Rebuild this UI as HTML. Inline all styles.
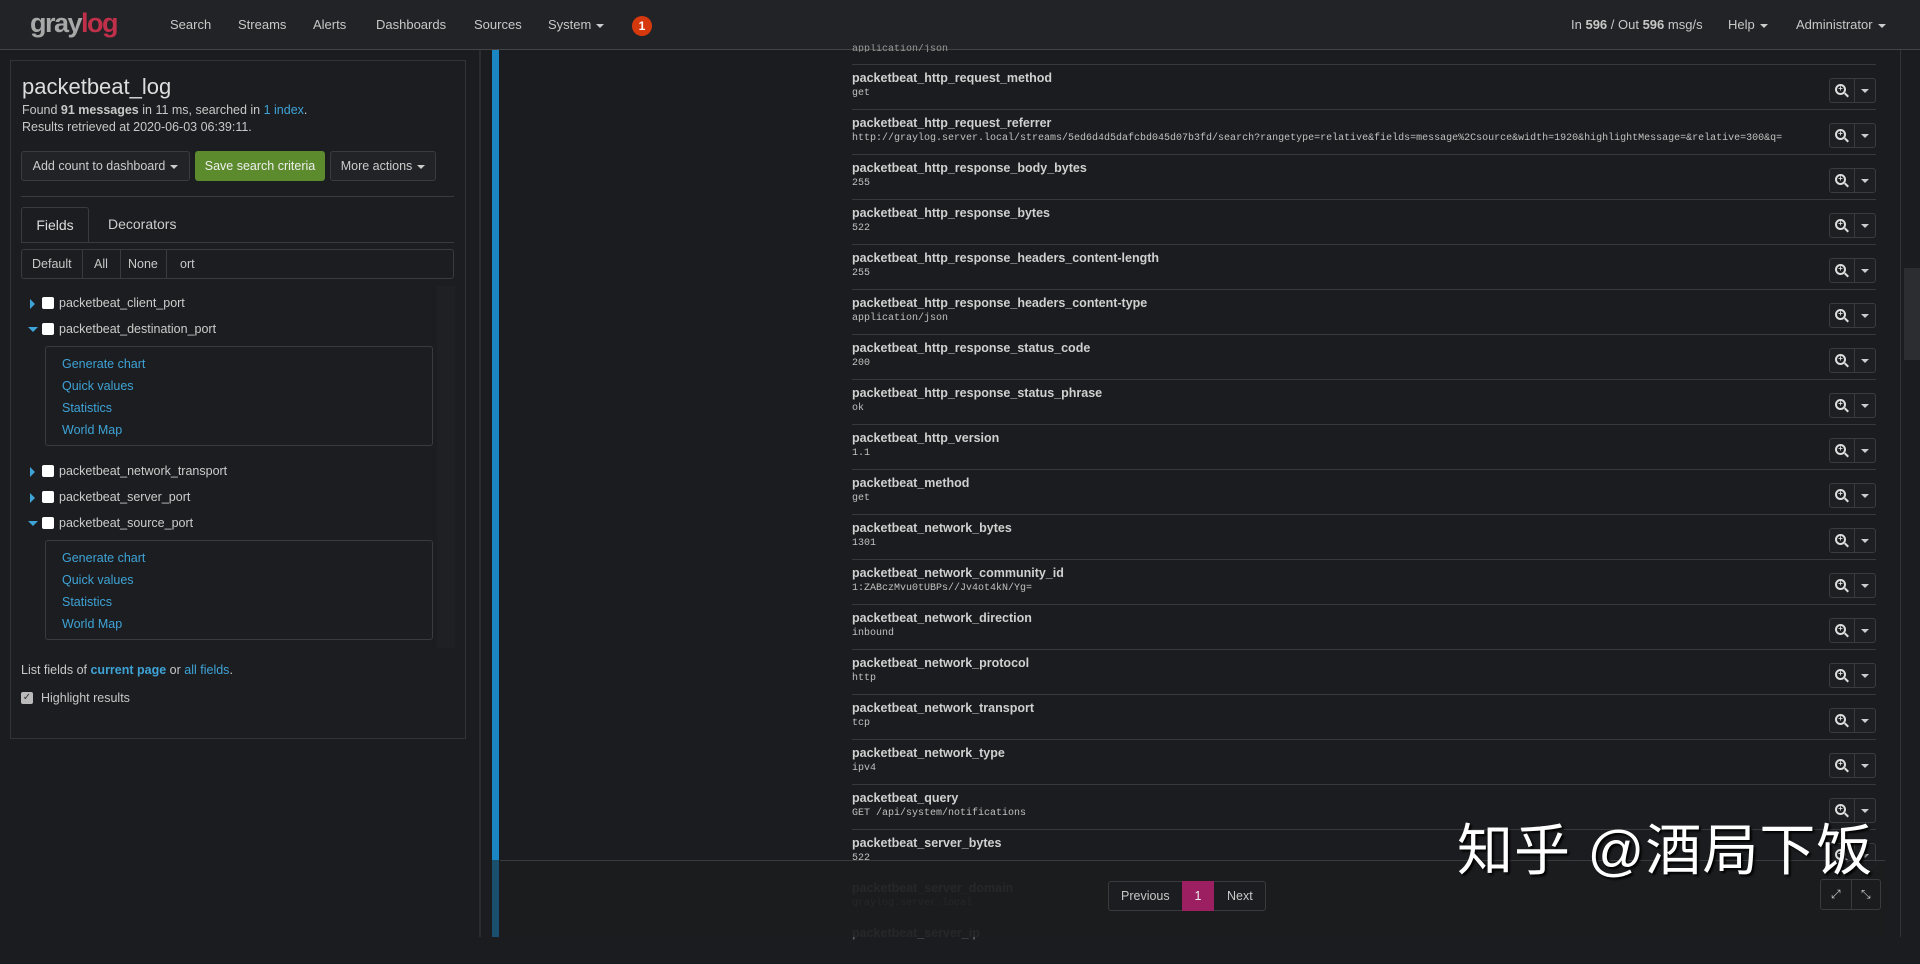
<!DOCTYPE html>
<html><head><meta charset="utf-8"><style>
*{box-sizing:border-box;margin:0;padding:0}
body{width:1920px;height:937px;overflow:hidden;background:#1b1c1f;font-family:"Liberation Sans",sans-serif;color:#c8c8c8;position:relative;font-size:13px}
.nav{position:absolute;left:0;top:0;width:1920px;height:50px;background:#222326;border-bottom:1px solid #444}
.nav span{position:absolute;top:17px;font-size:13px;color:#c8c8c8}
.caret{display:inline-block;width:0;height:0;border-left:4px solid transparent;border-right:4px solid transparent;border-top:4px solid #ccc;vertical-align:middle;margin-left:5px}
.badge{position:absolute;left:632px;top:16px;width:20px;height:20px;border-radius:10px;background:#d6390e;color:#fff;font-size:12px;text-align:center;line-height:20px;font-weight:bold}
.panel{position:absolute;left:10px;top:60px;width:456px;height:679px;background:#1c1d20;border:1px solid #333}
.a{color:#3ea3d6}
.btn{position:absolute;top:151px;height:30px;border:1px solid #3a3b3e;background:#222326;color:#ccc;font-size:12.5px;line-height:28px;text-align:center;border-radius:3px}
.fld{position:absolute;left:30px;font-size:12.5px;color:#ccc}
.tri{position:absolute;left:0;top:2px;width:0;height:0;border-top:5px solid transparent;border-bottom:5px solid transparent;border-left:5px solid #3ea3d6}
.trid{position:absolute;left:-2px;top:4px;width:0;height:0;border-left:5px solid transparent;border-right:5px solid transparent;border-top:5px solid #3ea3d6}
.cb{position:absolute;left:12px;top:0;width:12px;height:12px;background:#fff;border-radius:2px}
.fld .t{position:absolute;left:29px;top:-1px;white-space:nowrap}
.box{position:absolute;left:45px;width:388px;height:100px;border:1px solid #3a3b3e;border-radius:3px}
.box div{position:absolute;left:16px;font-size:12.5px;color:#3ea3d6}
.row{position:absolute;left:852px;width:1024px;height:45px;border-top:1px solid #38393c}
.row b{position:absolute;left:0;top:6px;font-size:12.5px;color:#d0d0d0}
.row i{position:absolute;left:0;top:23px;font-style:normal;font-family:"Liberation Mono",monospace;font-size:10px;color:#c0c0c0;white-space:nowrap}
.rb{position:absolute;right:0;top:13px;width:47px;height:25px;border:1px solid #3a3b3e;border-radius:3px;background:#1e1f22}
.rb:after{content:"";position:absolute;left:24px;top:0;bottom:0;border-left:1px solid #3a3b3e}
.rb .m{position:absolute;left:5px;top:5px;width:11px;height:11px;border:2px solid #ddd;border-radius:50%;font-style:normal;font-size:8px;line-height:7px;text-align:center;color:#ddd;font-weight:bold}
.rb .m:after{content:"";position:absolute;left:7px;top:8px;width:5px;height:2px;background:#ddd;transform:rotate(45deg)}
.rb .c{position:absolute;left:31px;top:10px;width:0;height:0;border-left:4px solid transparent;border-right:4px solid transparent;border-top:4px solid #ccc}
</style></head><body>
<div class="nav">
<div style="position:absolute;left:30px;top:8px;font-size:27px;letter-spacing:-1.5px;font-weight:bold"><span style="position:static;color:#a8a8a8;font-size:27px">gray</span><span style="position:static;color:#c0304a;font-size:27px">log</span></div>
<span style="left:170px">Search</span><span style="left:238px">Streams</span><span style="left:313px">Alerts</span><span style="left:376px">Dashboards</span><span style="left:474px">Sources</span><span style="left:548px">System<i class="caret"></i></span>
<div class="badge">1</div>
<span style="left:1571px">In <b>596</b> / Out <b>596</b> msg/s</span><span style="left:1728px">Help<i class="caret"></i></span><span style="left:1796px">Administrator<i class="caret"></i></span>
</div>
<div class="panel">
<div style="position:absolute;left:11px;top:13px;font-size:22px;color:#ddd">packetbeat_log</div>
<div style="position:absolute;left:11px;top:42px;font-size:12.5px">Found <b>91 messages</b> in 11 ms, searched in <span class="a">1 index</span>.</div>
<div style="position:absolute;left:11px;top:59px;font-size:12.5px">Results retrieved at 2020-06-03 06:39:11.</div>
</div>
<div class="btn" style="left:21px;width:169px">Add count to dashboard<i class="caret"></i></div>
<div class="btn" style="left:195px;width:130px;background:#5c8b2e;border-color:#5c8b2e;color:#eee">Save search criteria</div>
<div class="btn" style="left:330px;width:106px">More actions<i class="caret"></i></div>
<div style="position:absolute;left:21px;top:196px;width:433px;border-top:1px solid #3a3b3e"></div>
<div style="position:absolute;left:21px;top:207px;width:68px;height:36px;border:1px solid #3a3b3e;border-bottom:none;border-radius:3px 3px 0 0;background:#1c1d20;font-size:14px;text-align:center;line-height:34px;color:#ddd">Fields</div>
<div style="position:absolute;left:108px;top:216px;font-size:14px;color:#ccc">Decorators</div>
<div style="position:absolute;left:21px;top:242px;width:433px;border-top:1px solid #3a3b3e"></div>
<div style="position:absolute;left:21px;top:249px;width:433px;height:30px;border:1px solid #3a3b3e;border-radius:3px;font-size:12.5px;line-height:28px">
<span style="position:absolute;left:10px">Default</span><span style="position:absolute;left:60px;top:0;bottom:0;border-left:1px solid #3a3b3e"></span><span style="position:absolute;left:72px">All</span><span style="position:absolute;left:98px;top:0;bottom:0;border-left:1px solid #3a3b3e"></span><span style="position:absolute;left:106px">None</span><span style="position:absolute;left:144px;top:0;bottom:0;border-left:1px solid #3a3b3e"></span><span style="position:absolute;left:158px">ort</span></div>
<div style="position:absolute;left:437px;top:286px;width:18px;height:362px;background:#1f2023"></div>
<div class="fld" style="top:297px"><i class="tri"></i><i class="cb"></i><span class="t">packetbeat_client_port</span></div>
<div class="fld" style="top:323px"><i class="trid"></i><i class="cb"></i><span class="t">packetbeat_destination_port</span></div>
<div class="box" style="top:346px"><div style="top:10px">Generate chart</div><div style="top:32px">Quick values</div><div style="top:54px">Statistics</div><div style="top:76px">World Map</div></div>
<div class="fld" style="top:465px"><i class="tri"></i><i class="cb"></i><span class="t">packetbeat_network_transport</span></div>
<div class="fld" style="top:491px"><i class="tri"></i><i class="cb"></i><span class="t">packetbeat_server_port</span></div>
<div class="fld" style="top:517px"><i class="trid"></i><i class="cb"></i><span class="t">packetbeat_source_port</span></div>
<div class="box" style="top:540px"><div style="top:10px">Generate chart</div><div style="top:32px">Quick values</div><div style="top:54px">Statistics</div><div style="top:76px">World Map</div></div>
<div style="position:absolute;left:21px;top:663px;font-size:12.5px">List fields of <b class="a">current page</b> or <span class="a">all fields</span>.</div>
<div style="position:absolute;left:21px;top:692px;width:12px;height:12px;background:#bbb;border-radius:2px;color:#333;font-size:10px;line-height:12px;text-align:center">✓</div>
<div style="position:absolute;left:41px;top:691px;font-size:12.5px">Highlight results</div>

<div style="position:absolute;left:479px;top:50px;width:2px;height:887px;background:#2a2b2e"></div>
<div style="position:absolute;left:492px;top:50px;width:7px;height:810px;background:#1a86c2"></div>
<div style="position:absolute;left:492px;top:860px;width:7px;height:77px;background:#1a4f6e"></div>
<div style="position:absolute;left:1900px;top:50px;width:1px;height:887px;background:#333"></div>
<div style="position:absolute;left:1904px;top:268px;width:16px;height:92px;background:#2c2d30"></div>
<div style="position:absolute;left:852px;top:44px;font-family:'Liberation Mono',monospace;font-size:10px;color:#999;height:8px;overflow:hidden">application/json</div>

<div class="row" style="top:64px"><b>packetbeat_http_request_method</b><i>get</i><div class="rb"><i class="m">+</i><i class="c"></i></div></div>
<div class="row" style="top:109px"><b>packetbeat_http_request_referrer</b><i>http://graylog.server.local/streams/5ed6d4d5dafcbd045d07b3fd/search?rangetype=relative&amp;fields=message%2Csource&amp;width=1920&amp;highlightMessage=&amp;relative=300&amp;q=</i><div class="rb"><i class="m">+</i><i class="c"></i></div></div>
<div class="row" style="top:154px"><b>packetbeat_http_response_body_bytes</b><i>255</i><div class="rb"><i class="m">+</i><i class="c"></i></div></div>
<div class="row" style="top:199px"><b>packetbeat_http_response_bytes</b><i>522</i><div class="rb"><i class="m">+</i><i class="c"></i></div></div>
<div class="row" style="top:244px"><b>packetbeat_http_response_headers_content-length</b><i>255</i><div class="rb"><i class="m">+</i><i class="c"></i></div></div>
<div class="row" style="top:289px"><b>packetbeat_http_response_headers_content-type</b><i>application/json</i><div class="rb"><i class="m">+</i><i class="c"></i></div></div>
<div class="row" style="top:334px"><b>packetbeat_http_response_status_code</b><i>200</i><div class="rb"><i class="m">+</i><i class="c"></i></div></div>
<div class="row" style="top:379px"><b>packetbeat_http_response_status_phrase</b><i>ok</i><div class="rb"><i class="m">+</i><i class="c"></i></div></div>
<div class="row" style="top:424px"><b>packetbeat_http_version</b><i>1.1</i><div class="rb"><i class="m">+</i><i class="c"></i></div></div>
<div class="row" style="top:469px"><b>packetbeat_method</b><i>get</i><div class="rb"><i class="m">+</i><i class="c"></i></div></div>
<div class="row" style="top:514px"><b>packetbeat_network_bytes</b><i>1301</i><div class="rb"><i class="m">+</i><i class="c"></i></div></div>
<div class="row" style="top:559px"><b>packetbeat_network_community_id</b><i>1:ZABczMvu0tUBPs//Jv4ot4kN/Yg=</i><div class="rb"><i class="m">+</i><i class="c"></i></div></div>
<div class="row" style="top:604px"><b>packetbeat_network_direction</b><i>inbound</i><div class="rb"><i class="m">+</i><i class="c"></i></div></div>
<div class="row" style="top:649px"><b>packetbeat_network_protocol</b><i>http</i><div class="rb"><i class="m">+</i><i class="c"></i></div></div>
<div class="row" style="top:694px"><b>packetbeat_network_transport</b><i>tcp</i><div class="rb"><i class="m">+</i><i class="c"></i></div></div>
<div class="row" style="top:739px"><b>packetbeat_network_type</b><i>ipv4</i><div class="rb"><i class="m">+</i><i class="c"></i></div></div>
<div class="row" style="top:784px"><b>packetbeat_query</b><i>GET /api/system/notifications</i><div class="rb"><i class="m">+</i><i class="c"></i></div></div>
<div class="row" style="top:829px"><b>packetbeat_server_bytes</b><i>522</i><div class="rb"><i class="m">+</i><i class="c"></i></div></div>
<div class="row" style="top:874px;opacity:.35"><b>packetbeat_server_domain</b><i>graylog.server.local</i></div>
<div class="row" style="top:919px;opacity:.35"><b>packetbeat_server_ip</b></div>

<div style="position:absolute;left:500px;top:860px;width:1385px;height:77px;background:rgba(27,28,31,.82);border-top:1px solid #3a3b3e"></div>
<div style="position:absolute;left:1108px;top:881px;width:158px;height:30px;border:1px solid #3a3b3e;border-radius:3px;font-size:12.5px;line-height:28px;background:#1c1d20">
<span style="position:absolute;left:12px">Previous</span>
<span style="position:absolute;left:73px;top:-1px;width:32px;height:30px;background:#9c1f62;color:#eee;text-align:center;line-height:30px">1</span>
<span style="position:absolute;left:118px">Next</span></div>
<div style="position:absolute;left:1820px;top:879px;width:61px;height:31px;border:1px solid #3a3b3e;border-radius:3px;font-size:12px;color:#ccc;line-height:29px">
<span style="position:absolute;left:10px">⤢</span><span style="position:absolute;left:30px;top:0;bottom:0;border-left:1px solid #3a3b3e"></span><span style="position:absolute;left:40px">⤡</span></div>
<div style="position:absolute;left:1457px;top:806px;font-family:'Liberation Sans','Noto Sans CJK SC',sans-serif;font-size:56px;color:#fff;white-space:nowrap;text-shadow:2px 2px 2px #000;letter-spacing:1px">知乎 @酒局下饭</div>
</body></html>
